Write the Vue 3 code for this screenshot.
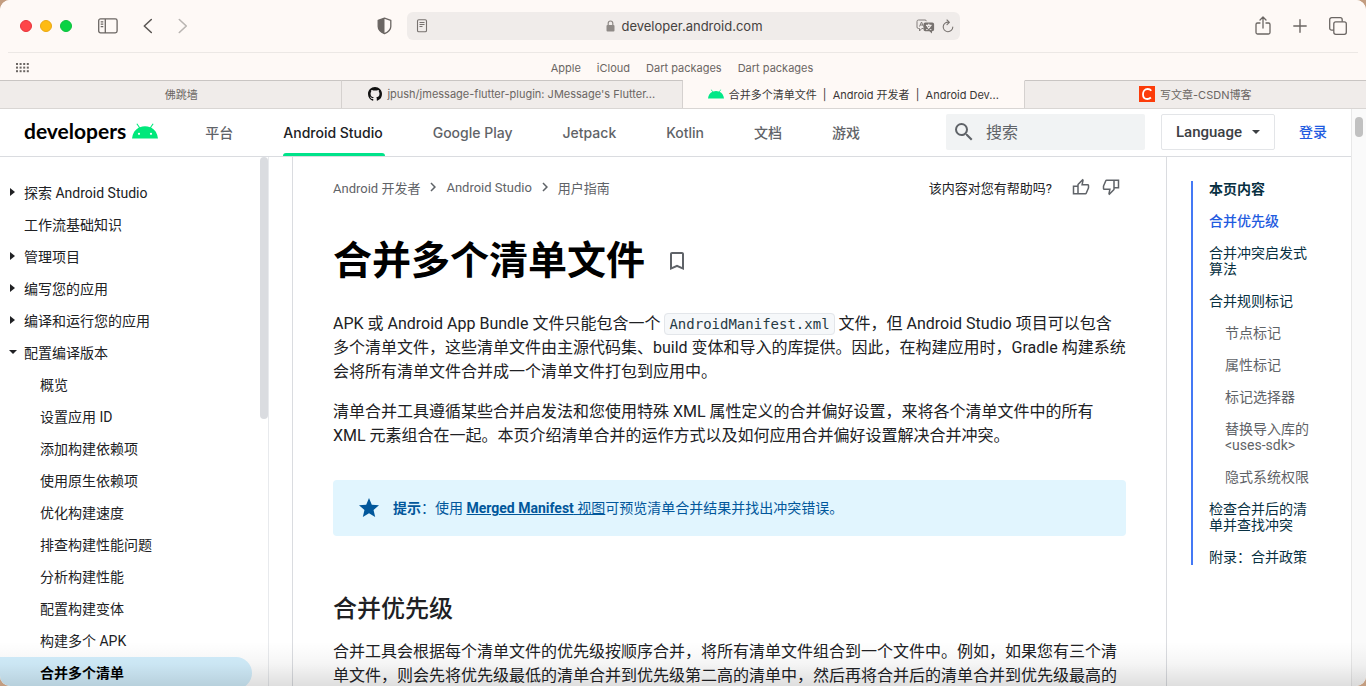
<script setup>
const favorites = ['Apple', 'iCloud', 'Dart packages', 'Dart packages']

const topNav = [
  { label: '平台' },
  { label: 'Android Studio', active: true },
  { label: 'Google Play' },
  { label: 'Jetpack' },
  { label: 'Kotlin' },
  { label: '文档' },
  { label: '游戏' },
]

const sideNav = [
  { label: '探索 Android Studio', arrow: 'right' },
  { label: '工作流基础知识' },
  { label: '管理项目', arrow: 'right' },
  { label: '编写您的应用', arrow: 'right' },
  { label: '编译和运行您的应用', arrow: 'right' },
  { label: '配置编译版本', arrow: 'down' },
  { label: '概览', nested: true },
  { label: '设置应用 ID', nested: true },
  { label: '添加构建依赖项', nested: true },
  { label: '使用原生依赖项', nested: true },
  { label: '优化构建速度', nested: true },
  { label: '排查构建性能问题', nested: true },
  { label: '分析构建性能', nested: true },
  { label: '配置构建变体', nested: true },
  { label: '构建多个 APK', nested: true },
  { label: '合并多个清单', nested: true, current: true },
]

const toc = [
  { label: '合并优先级', current: true },
  { label: '合并冲突启发式算法' },
  { label: '合并规则标记' },
  { label: '节点标记', nested: true },
  { label: '属性标记', nested: true },
  { label: '标记选择器', nested: true },
  { label: '替换导入库的 <uses-sdk>', nested: true },
  { label: '隐式系统权限', nested: true },
  { label: '检查合并后的清单并查找冲突' },
  { label: '附录：合并政策' },
]
</script>

<template>
  <div class="window" lang="zh-CN">
    <header class="chrome">
      <div class="toolbar">
        <div class="zone left">
          <div class="lights">
            <button class="light red" aria-label="关闭"></button>
            <button class="light yellow" aria-label="最小化"></button>
            <button class="light green" aria-label="缩放"></button>
          </div>
          <button class="icon-btn side-toggle" aria-label="边栏">
            <svg width="20" height="16" viewBox="0 0 20 16" fill="none" stroke="#6b6663" stroke-width="1.3">
              <rect x="0.7" y="0.9" width="18.4" height="14" rx="1.8" />
              <path d="M7.3 1v14M2.7 3.8h2.6M2.7 6.2h2.6M2.7 8.6h2.6" />
            </svg>
          </button>
          <button class="icon-btn back" aria-label="后退">
            <svg width="10" height="16" viewBox="0 0 10 16" fill="none" stroke="#5c5855" stroke-width="1.6" stroke-linecap="round" stroke-linejoin="round"><path d="M8.3 1.5L1.3 8l7 6.5" /></svg>
          </button>
          <button class="icon-btn forward" aria-label="前进">
            <svg width="10" height="16" viewBox="0 0 10 16" fill="none" stroke="#b9b5b2" stroke-width="1.6" stroke-linecap="round" stroke-linejoin="round"><path d="M1.3 1.5L8.3 8l-7 6.5" /></svg>
          </button>
          <button class="icon-btn shield" aria-label="隐私报告">
            <svg width="15" height="18" viewBox="0 0 15 18"><path d="M7.5 1.2L13.8 3.3v6.2c0 3.2-2.6 5.5-6.3 7.2C3.8 15 1.2 12.7 1.2 9.5V3.3z" fill="none" stroke="#6b6663" stroke-width="1.3" stroke-linejoin="round" /><path d="M7.5 1.2v15.5C3.8 15 1.2 12.7 1.2 9.5V3.3z" fill="#6b6663" /></svg>
          </button>
        </div>
        <div class="address">
          <button class="icon-btn" aria-label="阅读器">
            <svg width="12" height="14" viewBox="0 0 12 14" fill="none" stroke="#77726f"><rect x="1.5" y="0.8" width="9" height="12" rx="1.3" stroke-width="1.1" /><path d="M3.5 3.5h5M3.5 5.5h5M3.5 7.5h3" stroke-width="1" /></svg>
          </button>
          <span class="url">
            <svg width="9" height="12" viewBox="0 0 9 12"><rect x="0.5" y="5" width="8" height="6.5" rx="1" fill="#8f8a87" /><path d="M2.2 5.2V3.3a2.3 2.3 0 0 1 4.6 0v1.9" fill="none" stroke="#8f8a87" stroke-width="1.2" /></svg>
            developer.android.com
          </span>
          <span class="address-tools">
            <button class="icon-btn" aria-label="翻译">
              <svg width="19" height="15" viewBox="0 0 19 15" fill="none" stroke="#827d7a">
                <path d="M7.5 9.5H5.8L3.5 12V9.5H2.5a1.5 1.5 0 0 1-1.5-1.500V2.500A1.500 1.500 0 0 1 2.500 1h6.500a1.500 1.500 0 0 1 1.500 1.200" />
                <path d="M3.500 7.500L5.500 3l2 4.500M4.200 6h2.600" />
                <path d="M9.300 3.500h7a1.800 1.800 0 0 1 1.800 1.800v5.200a1.800 1.800 0 0 1-1.800 1.800h-.3v2.300l-2.600-2.300H9.300a1.800 1.800 0 0 1-1.800-1.800V5.300a1.800 1.800 0 0 1 1.800-1.800z" fill="#77726f" stroke="none" />
                <path d="M10 6.300h5.600M12.800 4.800v1.500M14.600 6.500c-.6 2-2.200 3.400-4.300 4.200M11 6.500c.6 2 2.200 3.400 4.300 4.200" stroke="#f0ecea" stroke-width="1.200" />
              </svg>
            </button>
            <button class="icon-btn" aria-label="重新载入">
              <svg width="12" height="14" viewBox="0 0 12 14" fill="none" stroke="#77726f" stroke-width="1.1" stroke-linecap="round" stroke-linejoin="round"><path d="M6.800 3.200A4.800 4.800 0 1 0 10.800 8M5 1l2.400 2.300L5 5.700" /></svg>
            </button>
          </span>
        </div>
        <div class="zone right">
          <button class="icon-btn" aria-label="共享">
            <svg width="16" height="20" viewBox="0 0 16 20" fill="none" stroke="#6b6663" stroke-width="1.3" stroke-linecap="round" stroke-linejoin="round"><path d="M5 7H2.500A1.500 1.500 0 0 0 1 8.500v8A1.500 1.500 0 0 0 2.500 18h11a1.500 1.500 0 0 0 1.500-1.500v-8A1.500 1.500 0 0 0 13.500 7H11M8 12V1.200M5 4l3-3 3 3" /></svg>
          </button>
          <button class="icon-btn" aria-label="新建标签页">
            <svg width="14" height="14" viewBox="0 0 14 14" fill="none" stroke="#6b6663" stroke-width="1.4" stroke-linecap="round"><path d="M7 .8v12.400M.8 7h12.400" /></svg>
          </button>
          <button class="icon-btn" aria-label="标签页概览">
            <svg width="18" height="18" viewBox="0 0 18 18" fill="none" stroke="#6b6663" stroke-width="1.3"><rect x="4.8" y="4.8" width="12.5" height="12.5" rx="2" /><path d="M4.800 13.200H2.700a2 2 0 0 1-2-2V2.700a2 2 0 0 1 2-2h8.500a2 2 0 0 1 2 2v2.100" /></svg>
          </button>
        </div>
      </div>

      <nav class="favorites" aria-label="个人收藏">
        <button class="icon-btn grid-btn" aria-label="起始页">
          <svg width="13" height="10" viewBox="0 0 13 10" fill="#6b6663"><template v-for="r in 3" :key="r"><rect v-for="c in 4" :key="c" :x="(c - 1) * 3.6" :y="(r - 1) * 3.6" width="2" height="2" /></template></svg>
        </button>
        <a v-for="(name, i) in favorites" :key="i" href="#">{{ name }}</a>
      </nav>

      <nav class="tabs" aria-label="标签页">
        <a class="tab plain" href="#">佛跳墙</a>
        <a class="tab" href="#">
          <svg width="14" height="14" viewBox="0 0 16 16"><path fill="#111" d="M8 0C3.580 0 0 3.580 0 8c0 3.540 2.290 6.530 5.470 7.590.4.070.55-.17.55-.38 0-.19-.01-.82-.01-1.490-2.010.37-2.530-.49-2.690-.94-.09-.23-.48-.94-.82-1.130-.28-.15-.68-.52-.01-.53.63-.01 1.080.58 1.230.82.72 1.210 1.870.87 2.330.66.07-.52.28-.87.51-1.070-1.780-.2-3.640-.89-3.640-3.950 0-.87.31-1.590.82-2.150-.08-.2-.36-1.020.08-2.120 0 0 .67-.21 2.200.82.64-.18 1.320-.27 2-.27s1.360.09 2 .27c1.530-1.040 2.200-.82 2.200-.82.44 1.100.16 1.920.08 2.120.51.56.82 1.270.82 2.150 0 3.070-1.870 3.750-3.650 3.950.29.25.54.73.54 1.480 0 1.070-.01 1.930-.01 2.200 0 .21.15.46.55.38A8.010 8.010 0 0 0 16 8c0-4.420-3.580-8-8-8z" /></svg>
          jpush/jmessage-flutter-plugin: JMessage's Flutter...
        </a>
        <a class="tab active" href="#" aria-current="page">
          <svg width="16" height="10" viewBox="0 0 26 15"><path fill="#00e887" d="M0 15C.5 9.700 3.300 6 7.200 4L4.500.5l.8-.5L8.200 3.500a13.600 13.600 0 0 1 9.600 0L20.700 0l.8.500L18.800 4C22.700 6 25.500 9.700 26 15z" /></svg>
          <span class="tab-title">合并多个清单文件&nbsp; |&nbsp; Android 开发者&nbsp; |&nbsp; Android Dev...</span>
        </a>
        <a class="tab" href="#">
          <svg width="16" height="16" viewBox="0 0 16 16"><rect width="16" height="16" fill="#fc3c0a" /><path d="M12.300 4.700C11.400 3.600 10.200 3 8.700 3 5.800 3 4 5.300 4 8.200c0 2.800 1.600 4.800 4.300 4.800 1.500 0 2.600-.5 3.600-1.500" fill="none" stroke="#fff" stroke-width="1.8" /></svg>
          写文章-CSDN博客
        </a>
      </nav>
    </header>

    <div class="viewport">
      <div class="page">
        <header class="site-header">
          <a class="brand" href="#">
            developers
            <svg width="26" height="16" viewBox="0 0 26 16"><path fill="#00e87b" d="M0 15.500C.5 10.500 3 6.700 6.900 4.600L4.400 1l.9-.6 2.600 3.800a14 14 0 0 1 10.200 0L20.700.4l.9.6-2.500 3.600c3.900 2.100 6.400 5.900 6.900 10.900z" /><circle cx="7" cy="10.8" r="1.1" fill="#fff" /><circle cx="19" cy="10.8" r="1.1" fill="#fff" /></svg>
          </a>
          <nav class="top-nav" aria-label="产品">
            <a v-for="item in topNav" :key="item.label" href="#" :class="{ active: item.active }">{{ item.label }}</a>
          </nav>
          <label class="search">
            <svg width="24" height="24" viewBox="0 0 24 24" fill="#5f6368"><path d="M15.500 14h-.79l-.28-.27A6.471 6.471 0 0 0 16 9.500 6.500 6.500 0 1 0 9.500 16c1.610 0 3.090-.59 4.230-1.570l.27.28v.79l5 4.990L20.490 19l-4.990-5zm-6 0C7.010 14 5 11.990 5 9.500S7.010 5 9.500 5 14 7.010 14 9.500 11.990 14 9.500 14z" /></svg>
            <input type="search" placeholder="搜索" aria-label="搜索" />
          </label>
          <button class="language">
            Language
            <svg width="8" height="4" viewBox="0 0 8 4"><path d="M0 0h8L4 4z" fill="#3c4043" /></svg>
          </button>
          <a class="login" href="#">登录</a>
        </header>

        <div class="columns">
          <aside class="sidebar">
            <ul>
              <li v-for="item in sideNav" :key="item.label">
                <a href="#" :class="{ nested: item.nested, current: item.current }">
                  <span class="marker">
                    <svg v-if="item.arrow === 'right'" width="5" height="8" viewBox="0 0 5 8"><path d="M0 0l5 4-5 4z" fill="#202124" /></svg>
                    <svg v-if="item.arrow === 'down'" width="8" height="4" viewBox="0 0 8 4"><path d="M0 0h8L4 4z" fill="#202124" /></svg>
                  </span>
                  {{ item.label }}
                </a>
              </li>
            </ul>
            <span class="side-thumb"></span>
          </aside>

          <main class="article">
            <div class="meta">
              <nav class="crumbs" aria-label="路径">
                <a href="#">Android 开发者</a>
                <svg width="18" height="18" viewBox="0 0 24 24"><path fill="#5f6368" d="M8.600 16.600L13.200 12 8.600 7.400 10 6l6 6-6 6z" /></svg>
                <a href="#">Android Studio</a>
                <svg width="18" height="18" viewBox="0 0 24 24"><path fill="#5f6368" d="M8.600 16.600L13.200 12 8.600 7.400 10 6l6 6-6 6z" /></svg>
                <a href="#">用户指南</a>
              </nav>
              <div class="feedback">
                <span>该内容对您有帮助吗?</span>
                <button class="icon-btn" aria-label="有帮助">
                  <svg width="18" height="18" viewBox="0 0 24 24" fill="#5f6368"><path d="M21 8h-6.310l.95-4.570.03-.32c0-.41-.17-.79-.44-1.060L14.170 1 7.580 7.590C7.220 7.950 7 8.450 7 9v1H1v12h17c.83 0 1.540-.5 1.840-1.220l3.020-7.050c.09-.23.14-.47.14-.73v-3c0-1.100-.9-2-2-2zM7 20H3v-8h4v8zm14-7l-3 7H9V9l4.340-4.340L12.230 10H21v3z" /></svg>
                </button>
                <button class="icon-btn" aria-label="没有帮助">
                  <svg width="18" height="18" viewBox="0 0 24 24" fill="#5f6368"><path d="M3 16h6.310l-.95 4.570-.03.32c0 .41.17.79.44 1.060L9.830 23l6.590-6.590c.36-.36.58-.86.58-1.410v-1h6V2H6c-.83 0-1.540.5-1.840 1.220l-3.020 7.050c-.09.23-.14.47-.14.73v3c0 1.100.9 2 2 2zM17 4h4v8h-4V4zM3 11l3-7h9v11l-4.340 4.340L11.770 14H3v-3z" /></svg>
                </button>
              </div>
            </div>

            <div class="title-row">
              <h1>合并多个清单文件</h1>
              <button class="icon-btn" aria-label="收藏">
                <svg width="24" height="24" viewBox="0 0 24 24" fill="#5f6368"><path d="M17 3H7c-1.100 0-1.990.9-1.990 2L5 21l7-3 7 3V5c0-1.100-.9-2-2-2zm0 15l-5-2.180L7 18V5h10v13z" /></svg>
              </button>
            </div>

            <p>APK 或 Android App Bundle 文件只能包含一个 <code>AndroidManifest.xml</code> 文件，但 Android Studio 项目可以包含多个清单文件，这些清单文件由主源代码集、build 变体和导入的库提供。因此，在构建应用时，Gradle 构建系统会将所有清单文件合并成一个清单文件打包到应用中。</p>
            <p>清单合并工具遵循某些合并启发法和您使用特殊 XML 属性定义的合并偏好设置，来将各个清单文件中的所有 XML 元素组合在一起。本页介绍清单合并的运作方式以及如何应用合并偏好设置解决合并冲突。</p>

            <aside class="tip">
              <svg width="24" height="24" viewBox="0 0 24 24"><path fill="#01579b" d="M12 17.270L18.180 21l-1.640-7.030L22 9.240l-7.190-.61L12 2 9.190 8.630 2 9.240l5.460 4.730L5.820 21z" /></svg>
              <span><strong>提示</strong>：使用 <a href="#"><strong>Merged Manifest</strong> 视图</a>可预览清单合并结果并找出冲突错误。</span>
            </aside>

            <h2>合并优先级</h2>
            <p>合并工具会根据每个清单文件的优先级按顺序合并，将所有清单文件组合到一个文件中。例如，如果您有三个清单文件，则会先将优先级最低的清单合并到优先级第二高的清单中，然后再将合并后的清单合并到优先级最高的</p>
          </main>

          <aside class="toc">
            <nav aria-label="本页内容">
              <strong>本页内容</strong>
              <a v-for="item in toc" :key="item.label" href="#" :class="{ nested: item.nested, current: item.current }">{{ item.label }}</a>
            </nav>
          </aside>
        </div>
      </div>
      <div class="scrollbar"><span class="thumb"></span></div>
    </div>
    <div class="fade"></div>
  </div>
</template>

<style>
html, body { background: #c39d80; }
</style>

<style scoped>
.window {
  position: relative;
  display: flex;
  flex-direction: column;
  height: 100vh;
  overflow: hidden;
  border-radius: 10px;
  background: #fff;
  color: #202124;
  font-family: Roboto, "Noto Sans CJK SC", sans-serif;
  font-size: 14px;
}
.window *, .window *::before { box-sizing: border-box; }
a { color: inherit; text-decoration: none; }
ul { list-style: none; margin: 0; padding: 0; }
button { font: inherit; color: inherit; }
svg { display: block; flex: none; }
.icon-btn { display: flex; flex: none; padding: 0; border: 0; background: none; }

/* browser chrome */
.chrome {
  flex: none;
  background: #fef9f6;
  color: #6b6663;
  font-family: Inter, "Noto Sans CJK SC", sans-serif;
  font-size: 11px;
}
.toolbar {
  display: grid;
  grid-template-columns: 1fr 553px 1fr;
  align-items: center;
  height: 53px;
  margin: 0 8px;
  border-bottom: 1px solid #ece8e5;
}
.zone { display: flex; align-items: center; }
.left { padding-left: 12px; }
.lights { display: flex; gap: 8px; }
.light { width: 12px; height: 12px; padding: 0; border: 1px solid; border-radius: 50%; }
.red { background: #fe4649; border-color: #e8333a; }
.yellow { background: #febb12; border-color: #eaa813; }
.green { background: #0ad344; border-color: #0cc03d; }
.side-toggle { margin-left: 26px; }
.back { margin-left: 25px; }
.forward { margin-left: 25px; }
.shield { margin: 0 15px 0 auto; }
.right { justify-content: flex-end; gap: 22px; padding-right: 11px; }
.address {
  display: grid;
  grid-template-columns: 1fr auto 1fr;
  align-items: center;
  height: 28px;
  padding: 0 6px 0 9px;
  border-radius: 6px;
  background: #f0ecea;
}
.url { display: flex; align-items: center; gap: 6px; color: #454240; font-size: 13px; }
.address-tools { display: flex; justify-content: flex-end; align-items: center; gap: 7px; }
.favorites {
  position: relative;
  display: flex;
  justify-content: center;
  align-items: center;
  gap: 16px;
  height: 27px;
  padding: 3px 2px 0 0;
}
.grid-btn { position: absolute; left: 16px; top: 10px; }
.tabs { display: grid; grid-template-columns: repeat(4, 1fr); height: 29px; border-bottom: 1px solid #d9d6d4; }
.tab {
  display: flex;
  justify-content: center;
  align-items: center;
  gap: 5px;
  min-width: 0;
  padding-bottom: 2px;
  border-top: 1px solid #c9c5c3;
  border-right: 1px solid #d5d1cf;
  background: #f0ecea;
  white-space: nowrap;
}
.tab.plain { padding-left: 22px; }
.tab:last-child { border-right: 0; }
.tab.active { border-top-color: #fef9f6; background: #fef9f6; color: #3a3735; }

/* page */
.viewport { display: flex; flex: 1; min-height: 0; }
.page { display: flex; flex: 1; flex-direction: column; min-width: 0; }
.scrollbar { width: 15px; padding: 8px 3px; border-left: 1px solid #e8e8e8; background: #fafafa; }
.thumb { display: block; height: 20px; border-radius: 4px; background: #c1c1c1; }
.site-header {
  display: flex;
  flex: none;
  align-items: center;
  height: 48px;
  padding: 0 24px 1px;
  border-bottom: 1px solid #dadce0;
}
.brand {
  display: flex;
  align-items: center;
  gap: 6px;
  padding-bottom: 3px;
  color: #000;
  font-family: Lato, sans-serif;
  font-size: 21px;
  font-weight: 700;
}
.top-nav {
  display: flex;
  gap: 50px;
  height: 100%;
  margin: 0 auto 0 47px;
  color: #5f6368;
  font-family: Inter, "Noto Sans CJK SC", sans-serif;
  font-weight: 500;
  white-space: nowrap;
}
.top-nav a { position: relative; display: flex; align-items: center; }
.top-nav .active { color: #202124; }
.top-nav .active::before {
  content: "";
  position: absolute;
  left: 0;
  right: -2px;
  bottom: -1px;
  height: 3px;
  border-radius: 3px 3px 0 0;
  background: #00e38a;
}
.search {
  display: flex;
  align-items: center;
  gap: 10px;
  width: 199px;
  height: 36px;
  margin-right: 16px;
  padding: 0 6px;
  border-radius: 2px;
  background: #f1f3f4;
}
.search input { width: 100%; min-width: 0; padding: 0; border: 0; outline: 0; background: none; font: inherit; font-size: 16px; }
.search input::placeholder { color: #5f6368; opacity: 1; }
.language {
  display: flex;
  justify-content: center;
  align-items: center;
  gap: 10px;
  width: 114px;
  height: 36px;
  margin-right: 24px;
  padding: 0;
  border: 1px solid #e3e5e8;
  border-radius: 2px;
  background: #fff;
  color: #3c4043;
  font-size: 15px;
  font-weight: 500;
}
.login { padding-bottom: 2px; color: #1f5be0; font-weight: 500; }

.columns { display: flex; flex: 1; min-height: 0; overflow: hidden; }
.sidebar { position: relative; flex: none; width: 269px; padding-top: 20px; border-right: 1px solid #e8eaed; }
.sidebar a { display: flex; align-items: center; height: 32px; margin-right: 16px; padding-bottom: 2px; }
.marker { display: flex; justify-content: center; flex: none; width: 24px; padding-left: 1px; }
.sidebar .nested .marker { width: 40px; }
.sidebar .current { border-radius: 0 16px 16px 0; background: #d3effd; color: #000; font-weight: 700; }
.side-thumb { position: absolute; top: 0; right: 0; width: 8px; height: 262px; border-radius: 4px; background: #dadce0; }

.article { flex: 1; min-width: 0; margin-left: 23px; padding: 20px 40px 0; border: 1px solid #dadce0; border-width: 0 1px; }
.meta { display: flex; justify-content: space-between; align-items: center; height: 20px; font-size: 13px; }
.crumbs { display: flex; align-items: center; gap: 4px; color: #5f6368; }
.feedback { display: flex; align-items: center; gap: 12px; padding-right: 6px; }
.feedback span { margin-right: 8px; }
.title-row { display: flex; align-items: center; gap: 20px; margin: 39px 0 26px; }
h1 { margin: 0; color: #000; font-size: 39px; font-weight: 700; line-height: 50px; }
h2 { margin: 56px 0 14px; font-size: 24px; font-weight: 500; line-height: 34px; }
p { margin: 0 0 16px; font-size: 16px; line-height: 24px; }
code {
  padding: 2px 4px;
  border: 1px solid #e3e6ea;
  border-radius: 4px;
  background: #f6f8fa;
  color: #263a44;
  font-family: "DejaVu Sans Mono", monospace;
  font-size: 14px;
  line-height: 16px;
}
.tip {
  display: flex;
  align-items: center;
  gap: 12px;
  margin-top: 32px;
  min-height: 56px;
  padding: 0 24px;
  border-radius: 4px;
  background: #e1f5fe;
  color: #01579b;
}
.tip span { padding-bottom: 2px; }
.tip a { text-decoration: underline; }

.toc { flex: none; width: 184px; padding: 24px 40px 0 24px; }
.toc nav { display: flex; flex-direction: column; gap: 16px; padding-left: 16px; border-left: 2px solid #4479f5; color: #073042; line-height: 16px; }
.toc strong { font-weight: 700; }
.toc .nested { padding-left: 16px; color: #5f6368; }
.toc .current { color: #1f5be0; font-weight: 500; }

.fade {
  position: absolute;
  left: 0;
  right: 0;
  bottom: 0;
  height: 44px;
  background: linear-gradient(rgba(0, 0, 0, 0), rgba(0, 0, 0, 0.04) 50%, rgba(0, 0, 0, 0.13));
  pointer-events: none;
}
</style>
